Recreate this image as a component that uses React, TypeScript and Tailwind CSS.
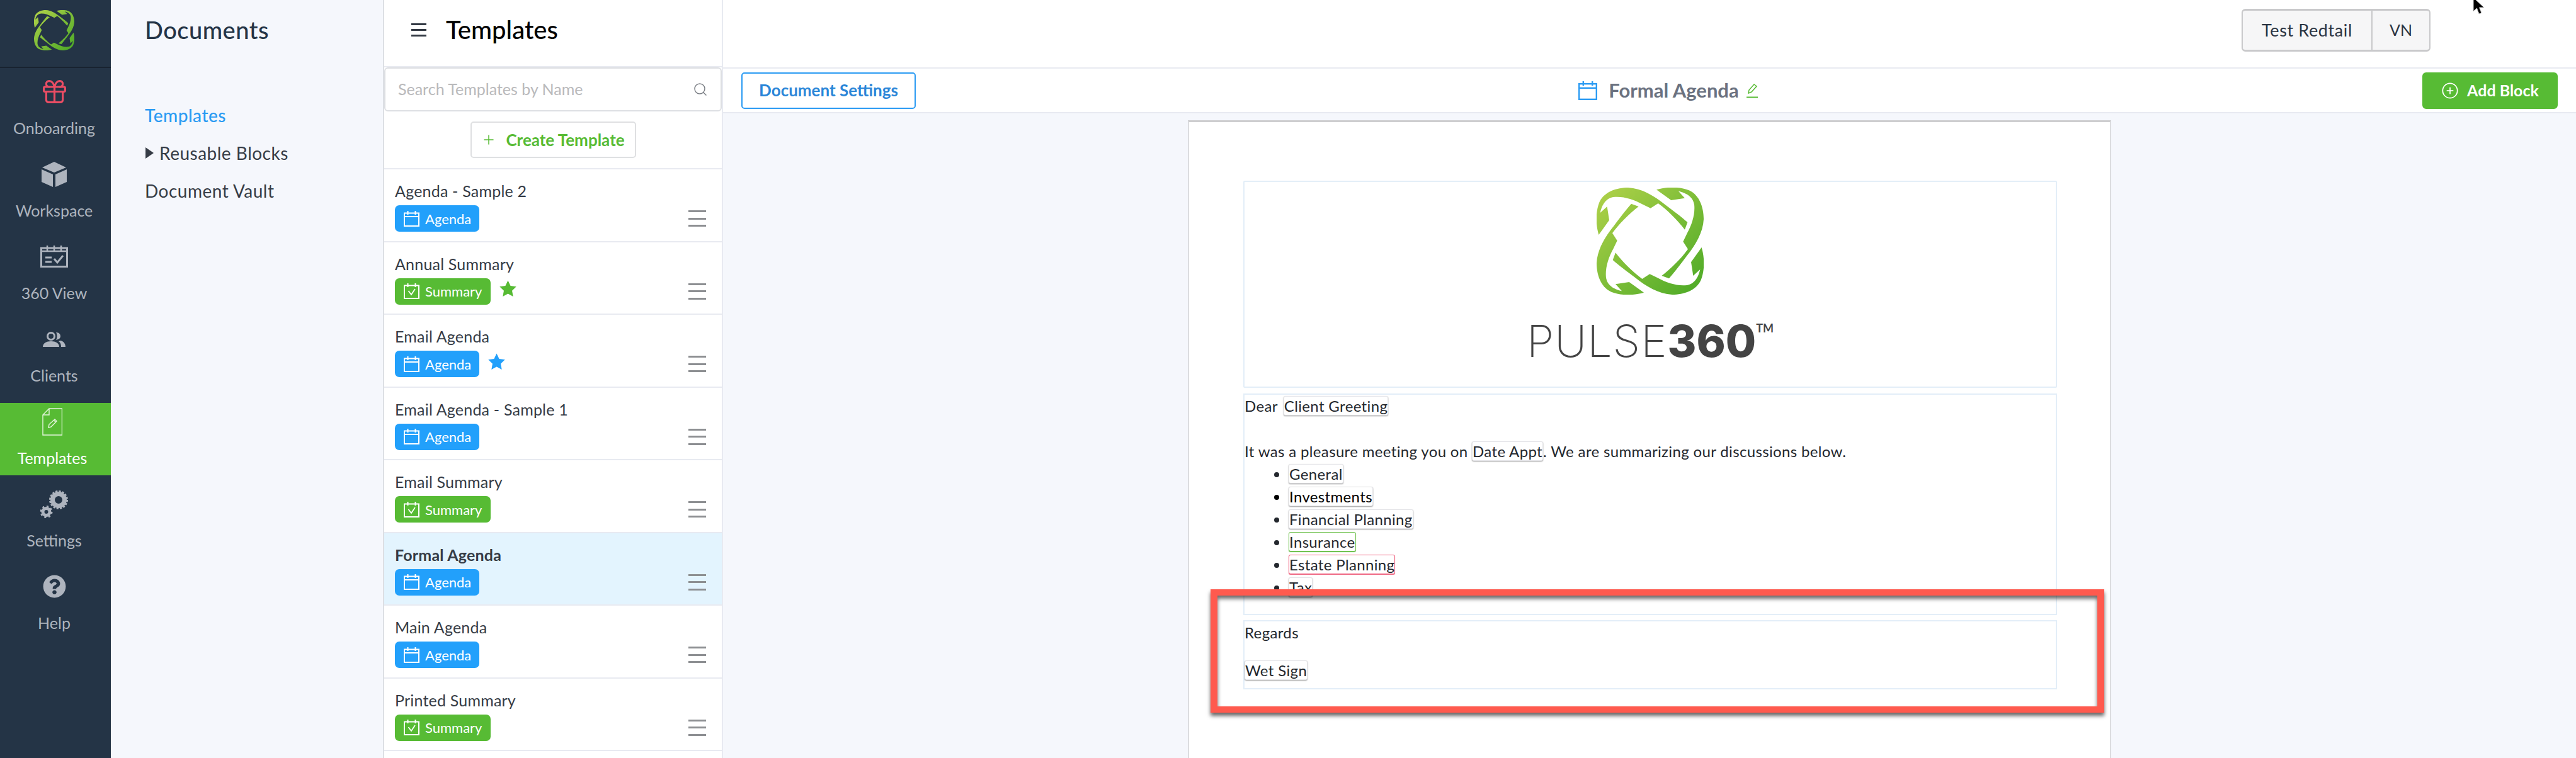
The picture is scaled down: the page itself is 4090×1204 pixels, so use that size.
import { CirclePlus, Gift, Plus, Search } from "lucide-react";
import { FaQuestionCircle } from "react-icons/fa";

/* Pulse360 ring logo: four identical swooshes under one gradient */
const SWOOSH =
  "M265 310C250 260 250 200 268 155C290 105 350 85 405 85C470 88 530 125 580 165C620 195 660 225 688 250L675 285C640 240 590 190 548 160L512 183L475 165C430 140 380 125 335 130C310 135 285 150 272 205L305 175L315 240Z";

function Logo({ id, className }: { id: string; className: string }) {
  return (
    <svg viewBox="255 85 510 510" className={className}>
      <defs>
        <linearGradient id={`${id}-g`} x1="0" y1="0" x2="1" y2="1">
          <stop offset="0" stopColor="#b2d24a" />
          <stop offset="1" stopColor="#4aa926" />
        </linearGradient>
        <mask id={`${id}-m`} maskUnits="userSpaceOnUse" x="255" y="85" width="510" height="510">
          {[0, 90, 180, 270].map((a) => (
            <path key={a} d={SWOOSH} fill="#fff" transform={`rotate(${a} 510 340)`} />
          ))}
        </mask>
      </defs>
      <rect x="255" y="85" width="510" height="510" fill={`url(#${id}-g)`} mask={`url(#${id}-m)`} />
    </svg>
  );
}

function CubeIcon() {
  return (
    <svg viewBox="0 0 40 40" className="h-[40px] w-[40px]" fill="#aeb4be">
      <path d="M20 0L39 9L20 17L1 9Z" />
      <path d="M0 12L18 20V40L0 32Z" />
      <path d="M22 20L40 12V32L22 40Z" />
    </svg>
  );
}

function ViewIcon() {
  return (
    <svg viewBox="0 0 44 35" className="h-[35px] w-[44px]" fill="none" stroke="#aeb4be" strokeWidth="3">
      <rect x="1.5" y="4" width="41" height="29.5" />
      <path d="M11 0V8M22 0V8M33 0V8M1 9H43" strokeWidth="2.5" />
      <path d="M8 19H18M8 26H18M22 21L27 27L36 16" />
    </svg>
  );
}

function ClientsIcon() {
  return (
    <svg viewBox="0 0 36 24" className="h-[24px] w-[36px]" fill="#aeb4be">
      <circle cx="13" cy="7" r="5.5" fill="none" stroke="#aeb4be" strokeWidth="3" />
      <path d="M0 24C0 18 6 15 13 15S26 18 26 24Z" />
      <path d="M21 1C26 1 28 4 28 7S26 12 21 13C23 10 23 4 21 1Z" />
      <path d="M28 14C33 15 36 19 36 24H29C29 20 28 17 25 15Z" />
    </svg>
  );
}

function TemplateIcon() {
  return (
    <svg viewBox="0 0 32 44" className="h-[44px] w-[32px]" fill="none" stroke="#e4f5dc" strokeWidth="1.4">
      <path d="M11 1H31.5V43H1V11Z" />
      <path d="M11 1V11H1" />
      <path d="M10 31L11 26L20 18L23 21L14 30Z" />
      <path d="M18.5 19.5L21.5 22.5" />
    </svg>
  );
}

function GearsIcon() {
  return (
    <svg viewBox="0 0 44 44" className="h-[44px] w-[44px]" fill="none" stroke="#aeb4be">
      <circle cx="29" cy="15" r="9.5" strokeWidth="7" />
      <circle cx="29" cy="15" r="13.5" strokeWidth="3" strokeDasharray="3.2 2.1" />
      <circle cx="9.5" cy="34" r="5.5" strokeWidth="5" />
      <circle cx="9.5" cy="34" r="8.5" strokeWidth="3" strokeDasharray="3 3.7" />
    </svg>
  );
}

function CalendarIcon({ className, stroke, check }: { className: string; stroke: string; check?: boolean }) {
  return (
    <svg viewBox="0 0 25 25" className={className} fill="none" stroke={stroke} strokeWidth="2">
      <rect x="1" y="3.5" width="23" height="20.5" />
      <path d="M6.5 0V6M18.5 0V6" />
      {check ? <path d="M7.5 12L12 18L18 9" strokeWidth="1.7" /> : <path d="M1 9H24" />}
    </svg>
  );
}

function PencilIcon() {
  return (
    <svg viewBox="0 0 24 24" className="h-[24px] w-[24px]" fill="none" stroke="#57bb34" strokeWidth="1.5">
      <path d="M6 16L7 11L15 2L19 5L11 14Z" />
      <path d="M3 22.5H21" strokeWidth="2" />
    </svg>
  );
}

function Star({ color }: { color: string }) {
  return (
    <svg viewBox="0 0 24 24" className="h-[27px] w-[27px]" fill={color}>
      <path d="M12 0.5L15.6 8L23.8 9.1L17.8 14.8L19.3 23L12 19L4.7 23L6.2 14.8L0.2 9.1L8.4 8Z" />
    </svg>
  );
}

function Bars({ className }: { className: string }) {
  return (
    <div className={`flex flex-col justify-between ${className}`}>
      <span className="h-[3px] bg-current" />
      <span className="h-[3px] bg-current" />
      <span className="h-[3px] bg-current" />
    </div>
  );
}

const NAV = [
  { label: "Onboarding", icon: <Gift size={45} color="#ea4d64" strokeWidth={1.7} /> },
  { label: "Workspace", icon: <CubeIcon /> },
  { label: "360 View", icon: <ViewIcon /> },
  { label: "Clients", icon: <ClientsIcon /> },
  { label: "Templates", icon: <TemplateIcon />, active: true },
  { label: "Settings", icon: <GearsIcon /> },
  { label: "Help", icon: <FaQuestionCircle size={37} color="#aeb4be" /> },
];

const TEMPLATES = [
  { name: "Agenda - Sample 2", type: "agenda" },
  { name: "Annual Summary", type: "summary", star: true },
  { name: "Email Agenda", type: "agenda", star: true },
  { name: "Email Agenda - Sample 1", type: "agenda" },
  { name: "Email Summary", type: "summary" },
  { name: "Formal Agenda", type: "agenda", selected: true },
  { name: "Main Agenda", type: "agenda" },
  { name: "Printed Summary", type: "summary" },
];

function Chip({ children, tone }: { children: React.ReactNode; tone?: "green" | "pink" }) {
  const border =
    tone === "green"
      ? "border-[#6cc04a] shadow-[0_1px_1px_#6cc04a]"
      : tone === "pink"
        ? "border-[#ee5a78] shadow-[0_1px_1px_#ee5a78]"
        : "border-[#e4e4e8] shadow-[0_1px_2px_rgba(0,0,0,0.4)]";
  return <span className={`inline-block rounded-[3px] border bg-white leading-[29px] ${border}`}>{children}</span>;
}

export default function App() {
  return (
    <div className="flex h-[1204px] w-[4090px] overflow-hidden bg-[#f5f7fc] font-['Lato',sans-serif]">
      {/* Main nav */}
      <nav className="flex w-[176px] shrink-0 flex-col bg-[#243446]">
        <div className="flex h-[108px] shrink-0 items-start justify-center border-b-2 border-[#182330] pt-[16px] pr-[4px]">
          <Logo id="nav" className="h-[64px] w-[64px]" />
        </div>
        <div className="flex flex-col gap-[16px] pt-[8px]">
          {NAV.map((item) => (
            <div
              key={item.label}
              className={`flex h-[115px] flex-col items-center ${
                item.active ? "bg-[#57bb34] pr-[10px] text-white" : "pr-[4px] text-[#aeb4be]"
              }`}
            >
              <div className="flex h-[66px] items-center">{item.icon}</div>
              <span className="text-[25px] leading-[56px]">{item.label}</span>
            </div>
          ))}
        </div>
      </nav>

      {/* Documents menu */}
      <aside className="w-[432px] shrink-0 pl-[54px]">
        <h1 className="pt-[22px] text-[38px] leading-[50px] font-medium tracking-[0.5px] text-[#243446]">Documents</h1>
        <div className="flex flex-col pt-[81px] text-[28px] leading-[60px] tracking-[0.5px] text-[#363c46]">
          <span className="font-medium text-[#2b9bf3]">Templates</span>
          <span className="flex items-center gap-[9px]">
            <span className="ml-[1px] h-0 w-0 border-y-[9px] border-l-[13px] border-y-transparent border-l-[#363c46]" />
            Reusable Blocks
          </span>
          <span>Document Vault</span>
        </div>
      </aside>

      {/* Template list */}
      <section className="flex w-[540px] shrink-0 flex-col border-x-2 border-l-[#dcdfe4] border-r-[#e8eaf1] bg-white">
        <header className="flex h-[107px] shrink-0 items-start gap-[31px] border-b-2 border-[#e8eaf1] pt-[22px] pl-[43px]">
          <Bars className="mt-[15px] h-[21px] w-[24px] text-[#333a44]" />
          <h2 className="text-[40px] leading-[50px] font-medium text-black">Templates</h2>
        </header>
        <div className="flex h-[70px] shrink-0 items-center justify-between rounded-[6px] border-2 border-[#dddfe3] pr-[20px] pl-[20px]">
          <span className="text-[25px] text-[#b9b9bb]">Search Templates by Name</span>
          <Search size={24} strokeWidth={1.5} color="#7b7f85" />
        </div>
        <div className="flex h-[92px] shrink-0 items-center justify-center border-b-2 border-[#e8eaf1]">
          <button className="flex h-[58px] w-[263px] items-center justify-center gap-[15px] rounded-[5px] border-2 border-[#dfe0e2] text-[26px] font-bold text-[#57bb34]">
            <Plus size={24} strokeWidth={1.5} />
            Create Template
          </button>
        </div>
        {TEMPLATES.map((t) => (
          <div
            key={t.name}
            className={`flex h-[115.5px] shrink-0 flex-col border-b-2 border-[#e8eaf1] pt-[16px] pr-[25px] pl-[17px] ${
              t.selected ? "bg-[#e3f4fe]" : ""
            }`}
          >
            <div className={`text-[25px] leading-[36px] tracking-[0.2px] text-[#363c46] ${t.selected ? "font-bold" : ""}`}>
              {t.name}
            </div>
            <div className="mt-[5px] flex items-center">
              <span
                className={`flex h-[42px] items-center gap-[9px] rounded-[7px] pl-[14px] text-[22px] text-white ${
                  t.type === "agenda" ? "w-[134px] bg-[#22a0fb]" : "w-[152px] bg-[#57bb34]"
                }`}
              >
                <CalendarIcon className="h-[25px] w-[25px]" stroke="#fff" check={t.type === "summary"} />
                {t.type === "agenda" ? "Agenda" : "Summary"}
              </span>
              {t.star && (
                <span className="mb-[8px] ml-[14px]">
                  <Star color={t.type === "agenda" ? "#22a0fb" : "#57bb34"} />
                </span>
              )}
              <Bars className="ml-auto h-[26px] w-[28px] text-[#8d8f92]" />
            </div>
          </div>
        ))}
      </section>

      {/* Editor */}
      <main className="relative flex min-w-0 flex-1 flex-col">
        <div className="flex h-[107px] shrink-0 items-start justify-end bg-white pt-[14px] pr-[231px]">
          <div className="flex h-[68px] items-stretch rounded-[6px] border-2 border-t-[3px] border-b-[3px] border-[#c9c9cb] bg-[#f6f6f7] text-[25px] text-[#2b3442]">
            <span className="flex w-[206px] items-center justify-center border-r-2 border-[#c9c9cb] text-[27px] tracking-[0.6px]">
              Test Redtail
            </span>
            <span className="flex w-[90px] items-center justify-center">VN</span>
          </div>
        </div>
        <svg viewBox="0 0 22 30" className="absolute top-[-4px] left-[2778px] h-[30px] w-[22px]">
          <path d="M1 0V22L6.5 17L10 26L14 24.5L10.5 16H18Z" fill="#000" stroke="#ccc" strokeWidth="1" />
        </svg>

        <div className="flex h-[73px] shrink-0 items-center justify-between border-y-2 border-[#e8eaf1] bg-white pr-[29px] pl-[29px]">
          <button className="flex h-[58px] w-[277px] items-center justify-center rounded-[5px] border-2 border-[#2b9bf3] text-[26px] font-bold text-[#2b86d8]">
            Document Settings
          </button>
          <div className="flex items-center gap-[9px] text-[31px] font-bold text-[#6b7280]">
            <CalendarIcon className="mr-[9px] h-[30px] w-[30px]" stroke="#2b9bf3" />
            Formal Agenda
            <PencilIcon />
          </div>
          <button className="flex h-[58px] w-[215px] items-center justify-center gap-[13px] rounded-[6px] bg-[#57bb34] text-[25px] font-bold text-white">
            <CirclePlus size={28} strokeWidth={1.5} />
            Add Block
          </button>
        </div>

        <div className="flex-1 overflow-hidden pt-[11px]">
          <div className="relative mx-auto h-[1100px] w-[1466px] border-x-2 border-t-[3px] border-x-[#dcdde0] border-t-[#cdcdcf] bg-white pt-[93px] pr-[84px] pl-[86px] text-[24px] tracking-[0.35px] text-[#24282e]">
            <div className="flex h-[329px] flex-col items-center rounded-[2px] border-2 border-[#e3eef8] pt-[9px]">
              <Logo id="doc" className="h-[170px] w-[170px]" />
              <div className="mt-[39px] flex items-start text-[70px] leading-[70px] tracking-normal text-[#444]">
                <span className="font-['Inter',sans-serif] font-extralight tracking-[1px]">PULSE</span>
                <span className="font-['Inter',sans-serif] font-extrabold">360</span>
                <span className="mt-[5px] text-[18px] leading-[18px] font-bold">TM</span>
              </div>
            </div>
            <div className="mt-[9px] h-[352px] border-2 border-[#e3eef8] leading-[36px]">
              <p>
                Dear <span className="ml-[3px]"><Chip>Client Greeting</Chip></span>
              </p>
              <p className="mt-[36px]">
                It was a pleasure meeting you on <Chip>Date Appt</Chip>. We are summarizing our discussions below.
              </p>
              <ul className="list-disc pl-[70px]">
                <li><Chip>General</Chip></li>
                <li className="text-black"><Chip>Investments</Chip></li>
                <li><Chip>Financial Planning</Chip></li>
                <li><Chip tone="green">Insurance</Chip></li>
                <li><Chip tone="pink">Estate Planning</Chip></li>
                <li><Chip>Tax</Chip></li>
              </ul>
            </div>
            <div className="mt-[8px] h-[110px] border-2 border-[#e3eef8] leading-[36px]">
              <p>Regards</p>
              <p className="mt-[24px]"><Chip>Wet Sign</Chip></p>
            </div>
            <div className="absolute top-[742px] left-[34px] h-[196px] w-[1419px] border-x-[11px] border-y-[10px] border-[#ff5a4e] shadow-[0_5px_6px_rgba(0,0,0,0.6),inset_0_5px_6px_rgba(0,0,0,0.6)]" />
          </div>
        </div>
      </main>
    </div>
  );
}
